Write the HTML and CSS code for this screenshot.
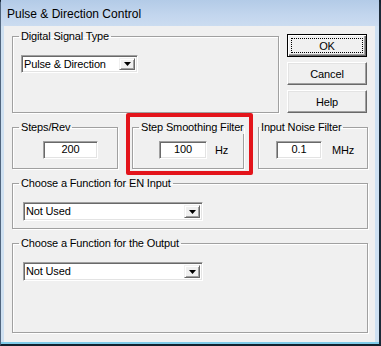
FILE: index.html
```html
<!DOCTYPE html>
<html>
<head>
<meta charset="utf-8">
<link rel="stylesheet" href="styles.css">
</head>
<body>
<div class="window">
  <div class="titlebar"><span class="title">Pulse &amp; Direction Control</span></div>
  <div class="client">
    <div class="top-row">
      <fieldset class="group g-signal">
        <legend>Digital Signal Type</legend>
        <div class="combo combo-signal sunken">
          <span class="combo-text">Pulse &amp; Direction</span>
          <span class="combo-btn"><svg width="7" height="4" viewBox="0 0 7 4"><path d="M0 0h7L3.5 4z" fill="#000"/></svg></span>
        </div>
      </fieldset>
      <div class="buttons">
        <button class="btn btn-default"><span class="focus">OK</span></button>
        <button class="btn">Cancel</button>
        <button class="btn">Help</button>
      </div>
    </div>
    <div class="mid-row">
      <fieldset class="group g-steps">
        <legend>Steps/Rev</legend>
        <div class="field-row"><div class="edit sunken">200</div></div>
      </fieldset>
      <div class="highlight">
        <fieldset class="group g-smooth">
          <legend>Step Smoothing Filter</legend>
          <div class="field-row"><div class="edit sunken">100</div><span class="unit">Hz</span></div>
        </fieldset>
      </div>
      <fieldset class="group g-noise">
        <legend>Input Noise Filter</legend>
        <div class="field-row"><div class="edit sunken">0.1</div><span class="unit unit-mhz">MHz</span></div>
      </fieldset>
    </div>
    <fieldset class="group g-en">
      <legend>Choose a Function for EN Input</legend>
      <div class="combo combo-wide sunken">
        <span class="combo-text">Not Used</span>
        <span class="combo-btn"><svg width="7" height="4" viewBox="0 0 7 4"><path d="M0 0h7L3.5 4z" fill="#000"/></svg></span>
      </div>
    </fieldset>
    <fieldset class="group g-out">
      <legend>Choose a Function for the Output</legend>
      <div class="combo combo-wide sunken">
        <span class="combo-text">Not Used</span>
        <span class="combo-btn"><svg width="7" height="4" viewBox="0 0 7 4"><path d="M0 0h7L3.5 4z" fill="#000"/></svg></span>
      </div>
    </fieldset>
  </div>
  <div class="frame-bottom"></div>
</div>
</body>
</html>
```

FILE: styles.css
```css
* { box-sizing: border-box; }
html, body { margin: 0; padding: 0; background: #142230; }
body { width: 381px; height: 346px; overflow: hidden; }

.window {
  width: 381px;
  height: 346px;
  background: #cfe1f2;
  border-left: 1px solid #50667f;
  border-right: 2px solid #1b2a38;
  border-bottom: 2px solid #12202c;
  border-top-left-radius: 4px;
  border-top-right-radius: 6px;
  display: flex;
  flex-direction: column;
  font-family: "Liberation Sans", Arial, sans-serif;
  font-size: 11px;
  letter-spacing: -0.15px;
  color: #000;
}

.titlebar {
  height: 26px;
  flex: none;
  background: linear-gradient(to bottom, #b3cbe7 0%, #c3d6ee 60%, #cbdcf0 100%);
  display: flex;
  align-items: center;
  padding-left: 6px;
  padding-top: 2px;
}
.title {
  font-family: "Liberation Sans", Arial, sans-serif;
  font-size: 12px;
  letter-spacing: 0;
  color: #000;
}

.client {
  flex: none;
  width: 371px;
  height: 316px;
  margin-left: 3px;
  background: #f0f0f0;
  display: flex;
  flex-direction: column;
  padding-left: 8px;
}
.frame-bottom {
  flex: none;
  height: 2px;
  background: #7fcbe9;
}

.group {
  margin: 0;
  border: 1px solid #a0a0a0;
  box-shadow: inset 1px 1px #fff, 1px 1px #fff;
  padding: 0 0 0 8px;
  min-width: 0;
}
.group legend {
  padding: 0 2px;
  margin-left: -2px;
  line-height: 13px;
  height: 13px;
  white-space: nowrap;
}

.top-row {
  display: flex;
  padding-top: 4px;
  gap: 8px;
}
.g-signal {
  width: 267px;
  height: 83px;
  padding-top: 12px;
}

.buttons {
  display: flex;
  flex-direction: column;
  gap: 5px;
  padding-top: 4px;
}
.btn {
  width: 80px;
  height: 23px;
  margin: 0;
  padding: 0;
  font-family: "Liberation Sans", Arial, sans-serif;
  font-size: 11px;
  letter-spacing: -0.15px;
  color: #000;
  background: #f0f0f0;
  border: 1px solid;
  border-color: #fff #696969 #696969 #fff;
  box-shadow: inset -1px -1px #a0a0a0, inset 1px 1px #e3e3e3;
  display: flex;
  align-items: center;
  justify-content: center;
}
.btn-default {
  border: 1px solid #000;
  box-shadow: inset 1px 1px #fff, inset -1px -1px #696969, inset -2px -2px #a0a0a0;
  padding: 3px;
}
.focus {
  flex: 1;
  align-self: stretch;
  border: 1px dotted #000;
  display: flex;
  align-items: center;
  justify-content: center;
}

.sunken {
  background: #fff;
  border: 1px solid;
  border-color: #a0a0a0 #fff #fff #a0a0a0;
  box-shadow: inset 1px 1px #696969, inset -1px -1px #e3e3e3;
}

.combo {
  height: 18px;
  display: flex;
  align-items: center;
  padding: 2px 2px 2px 2px;
}
.combo-signal { width: 117px; }
.combo-wide { width: 180px; height: 19px; margin-left: 2px; }
.combo-text { flex: 1; line-height: 13px; white-space: nowrap; }
.combo-btn {
  width: 16px;
  align-self: stretch;
  background: #f0f0f0;
  border: 1px solid;
  border-color: #f0f0f0 #696969 #696969 #f0f0f0;
  box-shadow: inset 1px 1px #fff, inset -1px -1px #a0a0a0;
  display: flex;
  align-items: center;
  justify-content: center;
}
.combo-btn svg { display: block; }

.mid-row {
  display: flex;
  margin-top: 8px;
  height: 48px;
}
.mid-row .group { height: 48px; padding-top: 7px; }
.g-steps { width: 106px; }
.highlight {
  border: 4px solid #e3141b;
  border-radius: 2px;
  margin: -8px 0 -6px 8px;
  padding: 4px 5px 2px 2px;
  height: 62px;
}
.g-smooth { width: 112px; }
.g-noise { width: 110px; margin-left: 5px; padding-left: 2px; }

.field-row { display: flex; align-items: center; }
.edit {
  height: 18px;
  line-height: 14px;
  text-align: center;
}
.g-steps .edit { width: 55px; margin-left: 22px; }
.g-smooth .edit { width: 48px; margin-left: 18px; }
.g-noise .edit { width: 46px; margin-left: 15px; }
.unit { margin-left: 8px; }
.unit-mhz { margin-left: 10px; }

.g-en {
  width: 356px;
  height: 52px;
  margin-top: 8px;
  padding-top: 12px;
}
.g-out {
  width: 356px;
  height: 96px;
  margin-top: 8px;
  padding-top: 12px;
}
```
